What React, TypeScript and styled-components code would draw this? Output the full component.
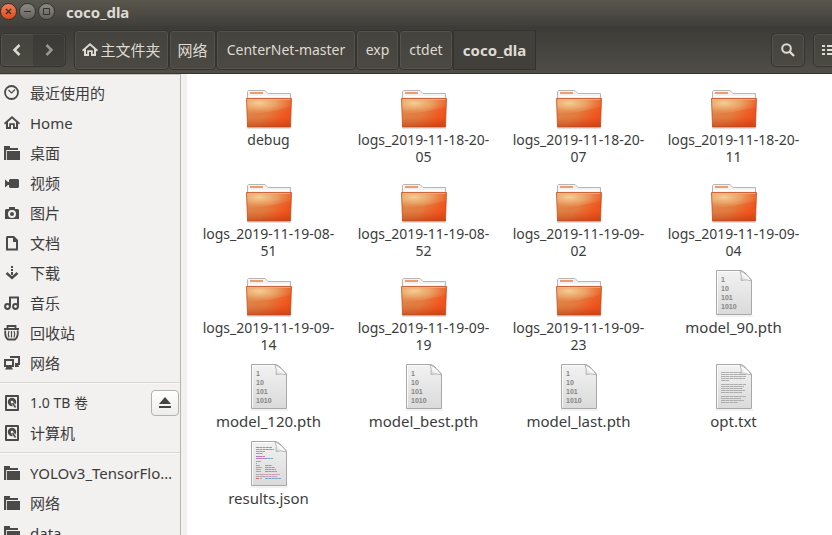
import React from "react";
import styled, { createGlobalStyle, css } from "styled-components";

const Global = createGlobalStyle`
  * { box-sizing: border-box; }
  html, body, #root { height: 100%; }
  body { margin: 0; overflow: hidden; background: #fff; }
  button { font: inherit; color: inherit; margin: 0; }
`;

const Window = styled.div`
  display: flex;
  flex-direction: column;
  height: 100vh;
  overflow: hidden;
  font: 14px/20px "Noto Sans", "Noto Sans CJK SC", sans-serif;
  color: #3c3c3c;
`;

const TitleBar = styled.header`
  display: flex;
  align-items: center;
  flex: none;
  height: 26px;
  padding-bottom: 3px;
  background: linear-gradient(#59564d, #403f3a);
  color: #dfdbd2;
`;

const WindowButton = styled.button<{ $close?: boolean }>`
  display: flex;
  align-items: center;
  justify-content: center;
  width: 17px;
  height: 17px;
  margin-right: 2px;
  padding: 0;
  border: 1px solid #34322e;
  border-radius: 50%;
  background: ${(p) => (p.$close ? "linear-gradient(#f37e5a, #de4c19)" : "linear-gradient(#8c8a84, #65635d)")};
  color: #34322e;
  svg { display: block; }
`;

const Title = styled.h1`
  margin: 0 0 0 9px;
  font-size: 15px;
  line-height: 20px;
  font-weight: 700;
`;

const Toolbar = styled.nav`
  display: flex;
  align-items: center;
  flex: none;
  height: 48px;
  background: linear-gradient(#3c3b37, #504d46);
  border-bottom: 1px solid #35342f;
  color: #dfdbd2;
`;

const raised = css`
  border: 1px solid #35332f;
  background: linear-gradient(#45433e, #4b4942);
  box-shadow: inset 0 0 0 1px #55534b;
`;

const NavGroup = styled.div`
  display: flex;
  flex: none;
  width: 66px;
  height: 34px;
  margin-right: 8px;
  border-radius: 5px;
  overflow: hidden;
  ${raised}
`;

const NavButton = styled.button<{ $dim?: boolean }>`
  display: flex;
  flex: 1;
  align-items: center;
  justify-content: center;
  padding: 0;
  border: 0;
  background: ${(p) => (p.$dim ? "rgba(0, 0, 0, 0.12)" : "none")};
  color: ${(p) => (p.$dim ? "#9a978f" : "#dfdbd2")};
`;

const PathBar = styled.div`
  display: flex;
  flex: 1;
`;

const Crumb = styled.button<{ $width: number; $cjk?: boolean; $current?: boolean }>`
  display: flex;
  align-items: center;
  justify-content: center;
  flex: none;
  gap: 2px;
  width: ${(p) => p.$width}px;
  height: 40px;
  padding: 0;
  border-radius: 4px;
  white-space: nowrap;
  ${raised}
  font-size: ${(p) => (p.$cjk || p.$current ? 15 : 14)}px;
  ${(p) =>
    p.$current &&
    css`
      border-radius: 0;
      background: #42403b;
      box-shadow: none;
      font-weight: 700;
    `}
`;

const Tools = styled.div`
  display: flex;
  flex: none;
  gap: 8px;
  width: 61px;
  overflow: hidden;
`;

const ToolButton = styled.button`
  display: flex;
  align-items: center;
  justify-content: center;
  flex: none;
  width: 34px;
  height: 34px;
  padding: 0;
  border-radius: 5px;
  ${raised}
`;

const Body = styled.div`
  display: flex;
  flex: 1;
  min-height: 0;
`;

const Sidebar = styled.aside`
  flex: none;
  width: 181px;
  overflow: hidden;
  border-top: 1px solid #c9c6c2;
  border-right: 1px solid #b8b5ad;
  background: #f2f1f0;
`;

const Handle = styled.div`
  flex: none;
  width: 6px;
  background: #f2f1f0;
`;

const Places = styled.ul`
  margin: 0;
  padding: 3px 0 4px;
  list-style: none;
  & + & {
    padding-top: 5px;
    border-top: 1px solid #d9d7d4;
    box-shadow: inset 0 1px #fafafa;
  }
`;

const Place = styled.li`
  display: flex;
  align-items: center;
  height: 30px;
`;

const PlaceLink = styled.a<{ $volume?: boolean }>`
  display: flex;
  align-items: center;
  flex: 1;
  gap: 10px;
  min-width: 0;
  padding-left: 4px;
  color: inherit;
  text-decoration: none;
  font-size: ${(p) => (p.$volume ? 14 : 15)}px;
  svg { flex: none; color: #4a4a4a; }
  span { white-space: nowrap; }
`;

const Eject = styled.button`
  display: flex;
  align-items: center;
  justify-content: center;
  flex: none;
  width: 28px;
  height: 26px;
  margin-right: 1px;
  padding: 0;
  border: 1px solid #b4b1ad;
  border-radius: 4px;
  background: linear-gradient(#fff, #eeedec);
`;

const Files = styled.main`
  display: grid;
  grid-template-columns: repeat(auto-fill, 155px);
  align-content: start;
  flex: 1;
  row-gap: 11px;
  min-width: 0;
  padding: 8px 0 0 4px;
  overflow: hidden;
  background: #fff;
`;

const FileItem = styled.a<{ $folder?: boolean }>`
  display: flex;
  flex-direction: column;
  align-items: center;
  gap: 1px;
  color: inherit;
  text-decoration: none;
  font-size: ${(p) => (p.$folder ? 14 : 15)}px;
  line-height: 17px;
  text-align: center;
  svg { display: block; }
`;

const FileName = styled.span`
  width: 140px;
`;

type IconName =
  | "recent" | "home" | "folder" | "video" | "camera" | "document"
  | "download" | "music" | "trash" | "network" | "disk";

const glyphs: Record<IconName, React.ReactNode> = {
  recent: (
    <g fill="none" stroke="currentColor">
      <circle cx="7.5" cy="7.5" r="6.5" strokeWidth="1.8" />
      <path d="M4.5 5l3 3 3.5-3.5" strokeWidth="1.2" />
    </g>
  ),
  home: (
    <path fillRule="evenodd" fill="currentColor" d="M8 1L0 8l1 1.4L2 8.6V14h5v-4h2v4h5V8.600L15 9.400 16 8zM8 3.500l4 3.500v5h-1.200V8.200H5.200V12H4V7z" />
  ),
  folder: (
    <g fill="currentColor">
      <path d="M0 1h6v2h8v2H2.200v10H0z" />
      <path d="M3 6h13v9H3z" />
    </g>
  ),
  video: (
    <path fill="currentColor" d="M1 4.500l3 2.500h1V5l1-1h8l1 1v7l-1 1H6l-1-1v-2H4l-3 2.500z" />
  ),
  camera: (
    <path fillRule="evenodd" fill="currentColor" d="M5 2h6v2h3l1 1v9H1V5l1-1h3zM8 5a4 4 0 1 0 0 8 4 4 0 0 0 0-8zm0 2a2 2 0 1 1 0 4 2 2 0 0 1 0-4z" />
  ),
  document: (
    <path fillRule="evenodd" fill="currentColor" d="M3 1h7l4 4v10.500H2V2zM4 3v10.500h8V7H9V3z" />
  ),
  download: (
    <g>
      <path fill="currentColor" d="M7 1h2v2H7zM7 4h2v2H7zM7 7h2v3H7z" />
      <path fill="none" stroke="currentColor" strokeWidth="2.400" d="M2.500 8L8 13l5.500-5" />
    </g>
  ),
  music: (
    <g fill="none" stroke="currentColor" strokeWidth="2">
      <circle cx="3.500" cy="11.500" r="2.400" />
      <circle cx="11.500" cy="11.500" r="2.400" />
      <path d="M6 11.500V2.500h8v9" />
    </g>
  ),
  trash: (
    <g fill="none" stroke="currentColor">
      <path d="M3.500 3V1h8v2M0 4h15" strokeWidth="1.800" />
      <path d="M1.500 5.500Q0.500 9 2.500 13l1.500 1.500h7l1.500-1.500Q14.500 9 13.500 5.500" strokeWidth="1.800" />
      <path d="M5 6q-1.500 3 0 6.500M7.500 6v6.500M10 6q1.500 3 0 6.500" strokeWidth="1.200" />
    </g>
  ),
  network: (
    <g>
      <path fill="none" stroke="currentColor" strokeWidth="2" d="M7 3V2h8v7h-4M1 5h8v6H1z" />
      <path fill="currentColor" d="M3 11h4l2 3.500H1zM11 9h3l1 3h-4z" />
    </g>
  ),
  disk: (
    <g>
      <path fill="none" stroke="currentColor" strokeWidth="2" d="M2 1h12v14H2z" strokeLinejoin="round" />
      <circle cx="8" cy="7" r="4.200" fill="currentColor" />
      <circle cx="8" cy="7" r="1.300" fill="#f2f1f0" />
      <path d="M8.500 8l3.500 5" stroke="#f2f1f0" strokeWidth="3" />
      <path d="M8.500 8l3 4.500" stroke="currentColor" strokeWidth="1.600" />
    </g>
  ),
};

const Icon = ({ name }: { name: IconName }) => (
  <svg width="16" height="16" viewBox="0 0 16 16" aria-hidden="true">
    {glyphs[name]}
  </svg>
);

const FolderArt = () => (
  <svg width="48" height="48" viewBox="0 0 48 48" aria-hidden="true">
    <defs>
      <linearGradient id="folderFront" x1="0" y1="0.2" x2="1" y2="0.7">
        <stop offset="0" stopColor="#dd8449" />
        <stop offset="0.5" stopColor="#e27b3f" />
        <stop offset="0.85" stopColor="#f0561f" />
        <stop offset="1" stopColor="#ea4f1a" />
      </linearGradient>
      <radialGradient id="folderGlow" cx="0.28" cy="0.3" r="0.75">
        <stop offset="0" stopColor="#f5cf96" />
        <stop offset="0.5" stopColor="#eeae72" stopOpacity="0.75" />
        <stop offset="1" stopColor="#f08a50" stopOpacity="0.1" />
      </radialGradient>
      <linearGradient id="folderShade" x1="0" y1="0" x2="0" y2="1">
        <stop offset="0.65" stopColor="#c9481a" stopOpacity="0" />
        <stop offset="1" stopColor="#b93a12" stopOpacity="0.6" />
      </linearGradient>
    </defs>
    <rect x="2" y="44" width="44" height="3" rx="1" fill="#000" opacity="0.12" />
    <path d="M2.500 20V9.500l1-1H20l3 3h22.500V20z" fill="#f3f3f2" stroke="#b5b5b3" />
    <rect x="5" y="10" width="13" height="2" fill="#ef9a70" />
    <path d="M4 14.500h40" stroke="#fff" />
    <path d="M1.500 16.500h45L45.500 45h-43z" fill="url(#folderFront)" />
    <path d="M1.500 16.500h45L45.500 45h-43z" fill="url(#folderShade)" />
    <path d="M1.500 16.500h45v8Q26 31 2 32z" fill="url(#folderGlow)" />
    <path d="M1.500 16.500h45L45.500 45h-43z" fill="none" stroke="#bd4418" strokeOpacity="0.7" />
    <path d="M2.500 17.500h43" stroke="#f5b48c" strokeOpacity="0.7" />
  </svg>
);

type FileKind = "folder" | "binary" | "text" | "json";

const Bits = () => (
  <g fill="#858585" fontFamily="Liberation Sans, sans-serif" fontSize="7" fontWeight="700">
    <text x="11" y="12">1</text>
    <text x="11" y="21">10</text>
    <text x="11" y="30">101</text>
    <text x="11" y="39">1010</text>
  </g>
);

const textRows = [[9, 20], [11, 25], [13, 25], [15, 24], [17, 8], [21, 25], [23, 23], [25, 22], [27, 24], [29, 21], [33, 25], [35, 20], [37, 23], [39, 17]];

const TextLines = () => (
  <g stroke="#adadad" strokeDasharray="4 0.300">
    {textRows.map(([y, w]) => (
      <path key={y} d={`M11 ${y - 0.5}h${w}`} />
    ))}
  </g>
);

const codeRuns: [number, number, number, string][] = [
  [11, 7, 16, "#78a5c4"], [11, 9, 18, "#78a5c4"], [11, 11, 9, "#78a5c4"], [11, 13, 7, "#78a5c4"],
  [11, 16, 3, "#a580cc"], [14, 16, 6, "#d277a8"], [11, 18, 3, "#a580cc"], [14, 18, 5, "#d277a8"], [19, 18, 9, "#78a5c4"],
  [11, 21, 3, "#6cc96c"], [14, 21, 2, "#aaa"], [11, 23, 1, "#6cc96c"],
  [11, 25, 4, "#6cc96c"], [20, 25, 7, "#78a5c4"], [11, 27, 3, "#6cc96c"], [14, 27, 3, "#aaa"], [20, 27, 10, "#78a5c4"],
  [11, 29, 3, "#6cc96c"], [14, 29, 2, "#aaa"], [20, 29, 11, "#78a5c4"], [11, 31, 3, "#6cc96c"], [14, 31, 2, "#aaa"], [20, 31, 12, "#78a5c4"],
  [11, 34, 6, "#aaa"], [17, 34, 18, "#d29ab8"], [11, 36, 6, "#aaa"], [17, 36, 15, "#b9a0b5"],
  [11, 38, 3, "#e86060"], [15, 38, 2, "#aaa"], [20, 38, 16, "#78a5c4"],
];

const CodeLines = () => (
  <g strokeDasharray="3 0.300">
    {codeRuns.map(([x, y, w, c]) => (
      <path key={`${x}-${y}`} d={`M${x} ${y - 0.5}h${w}`} stroke={c} />
    ))}
  </g>
);

const PageArt = ({ kind }: { kind: FileKind }) => (
  <svg width="48" height="48" viewBox="0 0 48 48" aria-hidden="true">
    <defs>
      <linearGradient id="page" x1="0" y1="0" x2="0" y2="1">
        <stop offset="0" stopColor="#f2f2f2" />
        <stop offset="1" stopColor="#dadada" />
      </linearGradient>
      <linearGradient id="fold" x1="0" y1="1" x2="1" y2="0">
        <stop offset="0" stopColor="#c9c9c9" />
        <stop offset="0.5" stopColor="#fff" />
        <stop offset="1" stopColor="#d6d6d6" />
      </linearGradient>
    </defs>
    <path d="M6 46h37" stroke="#000" strokeOpacity="0.1" />
    <path d="M6.500 0.500H31q3 1 5.500 4t5 5.500V44.500h-35z" fill="url(#page)" stroke="#a8a8a8" />
    <path d="M7.500 1.500H30M7.500 1.500v42" stroke="#fff" fill="none" strokeOpacity="0.8" />
    {kind === "binary" && <Bits />}
    {kind === "text" && <TextLines />}
    {kind === "json" && <CodeLines />}
    <path d="M30 1q2 4 1 9.500 6-1.500 10.500 0.500Q39 7 36 4.500T30 1z" fill="url(#fold)" stroke="#aaa" strokeWidth="0.800" />
  </svg>
);

interface PlaceData { icon: IconName; label: string; volume?: boolean }

const placeGroups: PlaceData[][] = [
  [
    { icon: "recent", label: "最近使用的" },
    { icon: "home", label: "Home" },
    { icon: "folder", label: "桌面" },
    { icon: "video", label: "视频" },
    { icon: "camera", label: "图片" },
    { icon: "document", label: "文档" },
    { icon: "download", label: "下载" },
    { icon: "music", label: "音乐" },
    { icon: "trash", label: "回收站" },
    { icon: "network", label: "网络" },
  ],
  [
    { icon: "disk", label: "1.0 TB 卷", volume: true },
    { icon: "disk", label: "计算机" },
  ],
  [
    { icon: "folder", label: "YOLOv3_TensorFlo…" },
    { icon: "folder", label: "网络" },
    { icon: "folder", label: "data" },
  ],
];

const crumbs = [
  { label: "主文件夹", width: 95, cjk: true, home: true },
  { label: "网络", width: 47, cjk: true },
  { label: "CenterNet-master", width: 140 },
  { label: "exp", width: 43 },
  { label: "ctdet", width: 54 },
  { label: "coco_dla", width: 83, current: true },
];

const files: { name: string; kind: FileKind }[] = [
  { name: "debug", kind: "folder" },
  { name: "logs_2019-11-18-20-05", kind: "folder" },
  { name: "logs_2019-11-18-20-07", kind: "folder" },
  { name: "logs_2019-11-18-20-11", kind: "folder" },
  { name: "logs_2019-11-19-08-51", kind: "folder" },
  { name: "logs_2019-11-19-08-52", kind: "folder" },
  { name: "logs_2019-11-19-09-02", kind: "folder" },
  { name: "logs_2019-11-19-09-04", kind: "folder" },
  { name: "logs_2019-11-19-09-14", kind: "folder" },
  { name: "logs_2019-11-19-09-19", kind: "folder" },
  { name: "logs_2019-11-19-09-23", kind: "folder" },
  { name: "model_90.pth", kind: "binary" },
  { name: "model_120.pth", kind: "binary" },
  { name: "model_best.pth", kind: "binary" },
  { name: "model_last.pth", kind: "binary" },
  { name: "opt.txt", kind: "text" },
  { name: "results.json", kind: "json" },
];

export default function App() {
  return (
    <Window>
      <Global />
      <TitleBar>
        <WindowButton $close aria-label="Close">
          <svg width="7" height="7" viewBox="0 0 7 7"><path d="M1 1l5 5M6 1L1 6" stroke="currentColor" strokeWidth="1.300" /></svg>
        </WindowButton>
        <WindowButton aria-label="Minimize">
          <svg width="7" height="7" viewBox="0 0 7 7"><path d="M0 3.500h7" stroke="currentColor" /></svg>
        </WindowButton>
        <WindowButton aria-label="Maximize">
          <svg width="7" height="7" viewBox="0 0 7 7"><path d="M0.500 0.500h6v6h-6z" fill="none" stroke="currentColor" /></svg>
        </WindowButton>
        <Title>coco_dla</Title>
      </TitleBar>
      <Toolbar>
        <NavGroup>
          <NavButton aria-label="Back">
            <svg width="16" height="16" viewBox="0 0 16 16"><path d="M10.500 3L5.500 8l5 5" fill="none" stroke="currentColor" strokeWidth="2.500" /></svg>
          </NavButton>
          <NavButton $dim aria-label="Forward">
            <svg width="16" height="16" viewBox="0 0 16 16"><path d="M5.500 3l5 5-5 5" fill="none" stroke="currentColor" strokeWidth="2.500" /></svg>
          </NavButton>
        </NavGroup>
        <PathBar>
          {crumbs.map((c) => (
            <Crumb key={c.label} $width={c.width} $cjk={c.cjk} $current={c.current}>
              {c.home && <Icon name="home" />}
              {c.label}
            </Crumb>
          ))}
        </PathBar>
        <Tools>
          <ToolButton aria-label="Search">
            <svg width="16" height="16" viewBox="0 0 16 16"><g fill="none" stroke="currentColor"><circle cx="6.500" cy="6.500" r="4.300" strokeWidth="2" /><path d="M9.500 9.500l4.500 4.500" strokeWidth="2.400" /></g></svg>
          </ToolButton>
          <ToolButton aria-label="List view">
            <svg width="16" height="16" viewBox="0 0 16 16"><path d="M0 3h3v2H0zM5 3h11v2H5zM0 7h3v2H0zM5 7h11v2H5zM0 11h3v2H0zM5 11h11v2H5z" fill="currentColor" /></svg>
          </ToolButton>
        </Tools>
      </Toolbar>
      <Body>
        <Sidebar>
          {placeGroups.map((group, i) => (
            <Places key={i}>
              {group.map((p) => (
                <Place key={p.label}>
                  <PlaceLink href="#" $volume={p.volume}>
                    <Icon name={p.icon} />
                    <span>{p.label}</span>
                  </PlaceLink>
                  {p.volume && (
                    <Eject aria-label="Eject">
                      <svg width="12" height="12" viewBox="0 0 12 12"><path d="M6 0l6 7H0zM0 9h12v2H0z" fill="#444" /></svg>
                    </Eject>
                  )}
                </Place>
              ))}
            </Places>
          ))}
        </Sidebar>
        <Handle />
        <Files>
          {files.map((f) => (
            <FileItem key={f.name} href="#" $folder={f.kind === "folder"}>
              {f.kind === "folder" ? <FolderArt /> : <PageArt kind={f.kind} />}
              <FileName>{f.name}</FileName>
            </FileItem>
          ))}
        </Files>
      </Body>
    </Window>
  );
}
